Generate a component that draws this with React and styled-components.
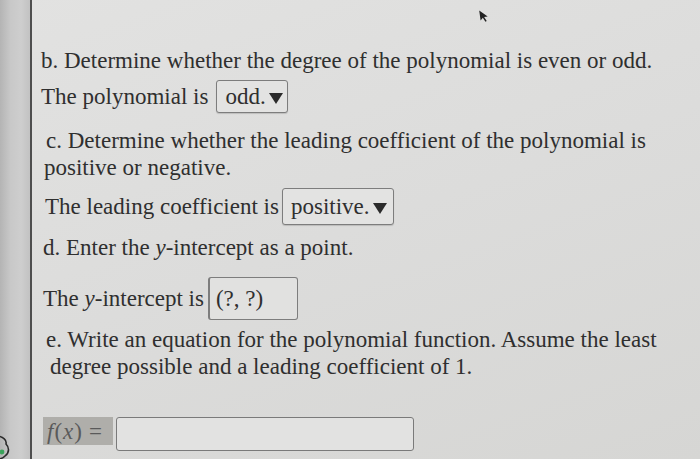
import React from "react";
import styled, { createGlobalStyle } from "styled-components";

const Global = createGlobalStyle`
  html, body {
    margin: 0;
    padding: 0;
    background: #d8d8d8;
  }
`;

const App = () => {
  return (
    <>
      <Global />
      <Page>
        <Sidebar />
        <Content>
          <Para top={47}>
            b. Determine whether the degree of the polynomial is even or odd.
          </Para>
          <Row top={6} height={33}>
            <span>The polynomial is</span>
            <Select width={72} height={33}>
              odd.<Caret />
            </Select>
          </Row>

          <Para top={14} indent={5}>
            c. Determine whether the leading coefficient of the polynomial is
          </Para>
          <Para indent={3}>positive or negative.</Para>
          <Row top={7} height={37} indent={4} gap={3}>
            <span>The leading coefficient is</span>
            <Select width={112} height={37}>
              positive.<Caret />
            </Select>
          </Row>

          <Para top={9} indent={2}>
            d. Enter the <MathVar>y</MathVar>-intercept as a point.
          </Para>
          <Row top={16} height={43} indent={2}>
            <span>
              The <MathVar>y</MathVar>-intercept is
            </span>
            <PointInput>(?, ?)</PointInput>
          </Row>

          <Para top={6} indent={5}>
            e. Write an equation for the polynomial function. Assume the least
          </Para>
          <Para indent={9}>degree possible and a leading coefficient of 1.</Para>

          <EquationRow>
            <EqLabel>
              <MathVar>f</MathVar>
              <Paren>(</Paren>
              <MathVar>x</MathVar>
              <Paren>)</Paren>
              <Equals>=</Equals>
            </EqLabel>
            <EqInput />
          </EquationRow>
        </Content>

        <Cursor viewBox="0 0 10 14">
          <path d="M1 1 L1 11 L3.6 8.6 L5.6 13 L7 12.3 L5 8 L8.6 8 Z" fill="#222" />
        </Cursor>
        <CornerIcon viewBox="0 0 16 30">
          <path
            d="M-2 6 C3 7 7 10 6 14 C9 17 10 22 5 26 C3 28 0 29 -2 29"
            fill="none"
            stroke="#2a2a2a"
            strokeWidth="1.6"
          />
          <circle cx="2" cy="22" r="2.4" fill="#3aa35a" />
        </CornerIcon>
      </Page>
    </>
  );
};

const Page = styled.div`
  position: relative;
  display: flex;
  width: 700px;
  height: 459px;
  overflow: hidden;
  background: linear-gradient(160deg, #e2e2e1 0%, #dcdcdb 50%, #d6d6d4 100%);
  font-family: "Liberation Serif", "DejaVu Serif", serif;
  color: #2f2f2f;
`;

const Sidebar = styled.div`
  width: 30px;
  flex-shrink: 0;
  background: linear-gradient(90deg, #b4b4b4 0%, #c8c8c8 35%, #cecece 70%, #c2c2c2 100%);
  border-right: 2px solid #4e4e4e;
`;

const Content = styled.div`
  flex: 1;
  display: flex;
  flex-direction: column;
  padding-left: 9px;
  font-size: 23px;
`;

const Para = styled.div`
  margin-top: ${(p) => p.top || 0}px;
  padding-left: ${(p) => p.indent || 0}px;
  line-height: 27px;
  white-space: nowrap;
`;

const Row = styled.div`
  display: flex;
  align-items: center;
  gap: ${(p) => (p.gap != null ? p.gap : 8)}px;
  margin-top: ${(p) => p.top || 0}px;
  padding-left: ${(p) => p.indent || 0}px;
  height: ${(p) => p.height}px;
  line-height: 27px;
  white-space: nowrap;
`;

const MathVar = styled.i`
  font-style: italic;
`;

const Select = styled.div`
  display: flex;
  align-items: center;
  box-sizing: border-box;
  width: ${(p) => p.width}px;
  height: ${(p) => p.height}px;
  padding-left: 8px;
  border: 1px solid #7d7d7d;
  border-radius: 3px;
  background: #e3e3e2;
  box-shadow: 0 1px 1px rgba(0, 0, 0, 0.15);
`;

const Caret = styled.span`
  display: inline-block;
  margin-left: 3px;
  margin-top: 3px;
  width: 0;
  height: 0;
  border-left: 7px solid transparent;
  border-right: 7px solid transparent;
  border-top: 11px solid #2b2b2b;
`;

const PointInput = styled.div`
  display: flex;
  align-items: center;
  box-sizing: border-box;
  width: 90px;
  height: 43px;
  margin-left: -4px;
  padding-left: 6px;
  border: 1px solid #7d7d7d;
  border-left-width: 2px;
  border-radius: 3px;
  background: #e1e1e0;
`;

const EquationRow = styled.div`
  display: flex;
  align-items: flex-start;
  gap: 3px;
  margin-top: 37px;
  padding-left: 2px;
`;

const EqLabel = styled.div`
  display: flex;
  align-items: center;
  box-sizing: border-box;
  width: 70px;
  height: 28px;
  padding-left: 4px;
  background: #afaeaa;
  color: #5a5a5a;
  line-height: 27px;
`;

const Paren = styled.span`
  margin: 0 1px;
`;

const Equals = styled.span`
  margin-left: 6px;
`;

const EqInput = styled.div`
  box-sizing: border-box;
  width: 298px;
  height: 34px;
  border: 1px solid #7a7a7a;
  border-radius: 3px;
  background: #e2e2e1;
`;

const Cursor = styled.svg`
  position: absolute;
  left: 479px;
  top: 9px;
  width: 10px;
  height: 14px;
  transform: rotate(-8deg);
`;

const CornerIcon = styled.svg`
  position: absolute;
  left: 0;
  top: 430px;
  width: 16px;
  height: 30px;
`;

export default App;
